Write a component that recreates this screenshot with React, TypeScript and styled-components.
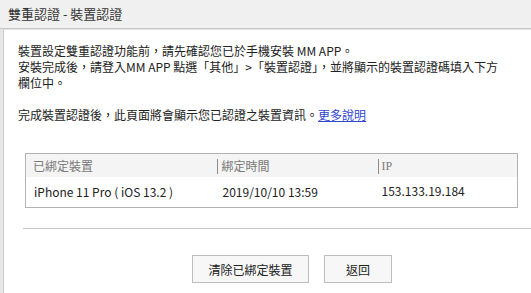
import React from 'react';
import styled, { createGlobalStyle } from 'styled-components';

const GlobalStyle = createGlobalStyle`
  html, body {
    margin: 0;
    padding: 0;
    background: #ffffff;
  }
  body {
    font-family: "Noto Sans CJK TC", "Noto Sans", "Liberation Sans", sans-serif;
    color: #222;
  }
`;

const Window = styled.div`
  width: 531px;
  height: 293px;
  overflow: hidden;
  display: flex;
  flex-direction: column;
  background: #fff;
`;

const TitleBar = styled.div`
  height: 28px;
  line-height: 28px;
  padding-left: 8px;
  font-size: 13px;
  color: #333;
  background: #f0f0f0;
  border-bottom: 1px solid #c9c9c9;
  box-shadow: 0 1px 0 #e2e2e2;
`;

const Body = styled.div`
  flex: 1;
  display: flex;
  margin-top: 1px;
`;

const Strip = styled.div`
  flex: 0 0 3px;
  background: #e6e6e6;
  border-right: 1px solid #cdcdcd;
`;

const Content = styled.div`
  flex: 1;
  min-width: 0;
  padding: 13px 0 0 14px;
`;

const Intro = styled.p`
  margin: 0;
  width: 488px;
  font-size: 12px;
  line-height: 16px;
  color: #222;
`;

const MoreLink = styled.a`
  color: #2f45d4;
  text-decoration: underline;
`;

const Table = styled.table`
  margin: 30px 0 0 7px;
  width: 492px;
  border-collapse: collapse;
  border: 1px solid #b3b3b3;
  font-size: 12px;
  table-layout: fixed;

  th, td {
    box-sizing: border-box;
  }
`;

const HeadCell = styled.th<{ $pad: number; $divider?: boolean }>`
  position: relative;
  height: 23px;
  padding: 0 0 0 ${p => p.$pad}px;
  background: #f4f4f4;
  color: #7a7a7a;
  font-weight: normal;
  text-align: left;

  &::before {
    content: '';
    display: ${p => (p.$divider ? 'block' : 'none')};
    position: absolute;
    left: 0;
    top: 5px;
    height: 15px;
    border-left: 1px solid #8a8a8a;
  }
`;

const IpLabel = styled.span`
  font-family: "Liberation Serif", "DejaVu Serif", serif;
`;

const Cell = styled.td<{ $pad: number; $lift?: boolean }>`
  height: 31px;
  padding: 0 0 ${p => (p.$lift ? 3 : 0)}px ${p => p.$pad}px;
  color: #222;
  white-space: nowrap;
`;

const Separator = styled.div`
  margin: 20px 0 0 5px;
  border-top: 1px solid #c8c8c8;
`;

const ButtonRow = styled.div`
  display: flex;
  gap: 15px;
  margin-top: 26px;
  padding-left: 174px;
`;

const Button = styled.button<{ $w: number }>`
  width: ${p => p.$w}px;
  height: 28px;
  padding: 0;
  background: #f7f7f7;
  border: 1px solid #bdbdbd;
  border-radius: 0;
  font-family: inherit;
  font-size: 12px;
  color: #222;
`;

export default function App() {
  return (
    <>
      <GlobalStyle />
      <Window>
        <TitleBar>雙重認證 - 裝置認證</TitleBar>
        <Body>
          <Strip />
          <Content>
            <Intro>
              裝置設定雙重認證功能前，請先確認您已於手機安裝 MM APP。
              <br />
              安裝完成後，請登入MM APP 點選「其他」&gt;「裝置認證」，並將顯示的裝置認證碼填入下方欄位中。
              <br />
              <br />
              完成裝置認證後，此頁面將會顯示您已認證之裝置資訊。<MoreLink href="#">更多說明</MoreLink>
            </Intro>

            <Table>
              <colgroup>
                <col style={{ width: 191 }} />
                <col style={{ width: 161 }} />
                <col style={{ width: 140 }} />
              </colgroup>
              <thead>
                <tr>
                  <HeadCell $pad={7}>已綁定裝置</HeadCell>
                  <HeadCell $pad={5} $divider>綁定時間</HeadCell>
                  <HeadCell $pad={4} $divider>
                    <IpLabel>IP</IpLabel>
                  </HeadCell>
                </tr>
              </thead>
              <tbody>
                <tr>
                  <Cell $pad={8}>iPhone 11 Pro ( iOS 13.2 )</Cell>
                  <Cell $pad={6}>2019/10/10 13:59</Cell>
                  <Cell $pad={4} $lift>153.133.19.184</Cell>
                </tr>
              </tbody>
            </Table>

            <Separator />

            <ButtonRow>
              <Button $w={117}>清除已綁定裝置</Button>
              <Button $w={68}>返回</Button>
            </ButtonRow>
          </Content>
        </Body>
      </Window>
    </>
  );
}
